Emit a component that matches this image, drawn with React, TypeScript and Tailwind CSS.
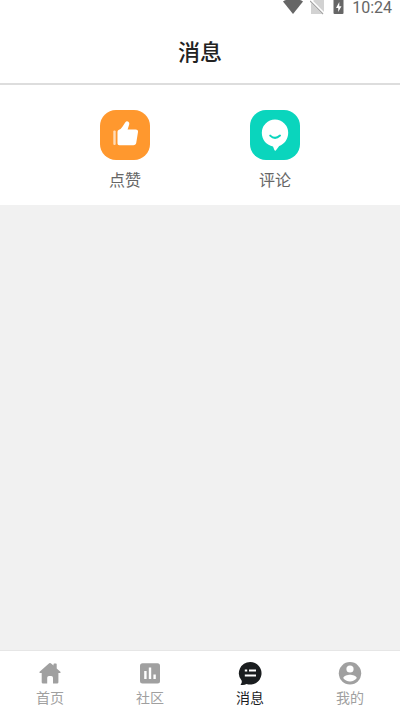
import type { ReactNode } from 'react';

function StatusBar() {
  return (
    <div className="flex h-4 items-start justify-end pr-2 text-[#666666]">
      <svg className="mr-[7px] h-4 w-5" viewBox="0 0 20 16" fill="currentColor" aria-hidden="true">
        <path d="M0 1.5Q1.5 0 3 0H17Q18.5 0 20 1.5L10 14Z" />
      </svg>
      <svg className="mr-[7px] h-4 w-4" viewBox="0 0 16 16" aria-hidden="true">
        <path d="M4 0H14V14H1V3Z" fill="#d2d2d2" />
        <path d="M0 0L14 14" stroke="#ffffff" strokeWidth="3" />
        <path d="M0 1L13 14" stroke="#a5a5a5" strokeWidth="1.2" />
      </svg>
      <svg className="mr-[7px] h-4 w-3" viewBox="0 0 12 16" aria-hidden="true">
        <path d="M0.5 0H10.5V13Q10.5 14 9.5 14H1.5Q0.5 14 0.5 13Z" fill="currentColor" />
        <path d="M6.3 2L3 8H5.2V12L8.5 6.2H6.3Z" fill="#ffffff" />
      </svg>
      <span className="font-['Roboto',sans-serif] text-base leading-4">10:24</span>
    </div>
  );
}

function ThumbIcon() {
  return (
    <svg className="h-[50px] w-[50px]" viewBox="0 0 50 50" aria-hidden="true">
      <rect width="50" height="50" rx="16" fill="#ff982e" />
      <rect x="13.3" y="20.5" width="2.4" height="14.5" rx="1" fill="#ffdcb8" />
      <path
        d="M17.5 21.8Q17.5 20.3 19 19.8Q21.2 19 22.6 16.6L25.2 12.6Q26.6 10.6 28.4 11.8Q29.8 12.8 29.2 14.6L27.6 19.4H35.6Q38.4 19.4 38 22.1L36.3 32.5Q35.9 35.2 33.3 35.2H19.3Q17.5 35.2 17.5 33.4Z"
        fill="#ffffff"
      />
    </svg>
  );
}

function SmileIcon() {
  return (
    <svg className="h-[50px] w-[50px]" viewBox="0 0 50 50" aria-hidden="true">
      <rect width="50" height="50" rx="16" fill="#0ad5bd" />
      <path
        d="M25 9.6A13.2 13.2 0 0 1 38.2 22.8C38.2 29.3 34.2 34.3 29.2 36L26 40.2Q25 41.4 24.4 40L23 36.4C16.8 35.6 11.8 29.8 11.8 22.8A13.2 13.2 0 0 1 25 9.6Z"
        fill="#ffffff"
      />
      <path d="M20.2 25.6Q25 30.2 30 25.6" fill="none" stroke="#0ad5bd" strokeWidth="2" strokeLinecap="round" />
    </svg>
  );
}

function Shortcut({ label, icon }: { label: string; icon: ReactNode }) {
  return (
    <button type="button" className="flex flex-col items-center gap-[7px] text-base leading-6 text-[#666666]">
      {icon}
      {label}
    </button>
  );
}

function HomeIcon() {
  return (
    <svg className="h-6 w-6" viewBox="0 0 24 24" fill="currentColor" aria-hidden="true">
      <path d="M11.2 2.3Q12 1.6 12.8 2.3L15.5 4.6V3.2Q15.5 2.5 16.2 2.5H18Q18.7 2.5 18.7 3.2V7.4L22.4 10.7Q23.2 12 21.8 12.1H20.4V21.3Q20.4 22.6 19.1 22.6H15V16.8Q15 15 13.2 15H11Q9.2 15 9.2 16.8V22.6H5Q3.7 22.6 3.7 21.3V12.1H2.2Q0.8 12 1.6 10.7Z" />
    </svg>
  );
}

function ChartIcon() {
  return (
    <svg className="h-6 w-6" viewBox="0 0 24 24" aria-hidden="true">
      <rect x="2" y="2.3" width="20" height="20.3" rx="2.5" fill="currentColor" />
      <path d="M6.2 10H8.6V18H6.2ZM10.8 6.6H13.2V18H10.8ZM15.4 13.4H17.8V18H15.4Z" fill="#ffffff" />
    </svg>
  );
}

function MessageIcon() {
  return (
    <svg className="h-6 w-6" viewBox="0 0 24 24" aria-hidden="true">
      <path
        d="M12.2 1A11.3 11.3 0 1 1 8.6 23Q6 24.2 3 24Q2.4 23.8 3 23Q4.2 21.6 3.6 19.6A11.3 11.3 0 0 1 12.2 1Z"
        fill="currentColor"
      />
      <path d="M6.8 9.4H9.2M11 9.4H18M6.8 14.6H18" stroke="#ffffff" strokeWidth="2" />
    </svg>
  );
}

function ProfileIcon() {
  return (
    <svg className="h-6 w-6" viewBox="0 0 24 24" aria-hidden="true">
      <circle cx="12" cy="12.3" r="11.2" fill="currentColor" />
      <circle cx="12" cy="8" r="3.6" fill="#ffffff" />
      <path d="M5.2 17C5.8 14.6 9.6 13.8 12 13.8S18.2 14.6 18.8 17C17.2 19.2 14.8 20.4 12 20.4S6.8 19.2 5.2 17Z" fill="#ffffff" />
    </svg>
  );
}

const tabs = [
  { label: '首页', icon: <HomeIcon />, active: false },
  { label: '社区', icon: <ChartIcon />, active: false },
  { label: '消息', icon: <MessageIcon />, active: true },
  { label: '我的', icon: <ProfileIcon />, active: false },
];

export default function App() {
  return (
    <div className="flex min-h-screen flex-col bg-[#f1f1f1] font-['Noto_Sans_CJK_SC',sans-serif]">
      <header className="border-b-2 border-[#dddddd] bg-white">
        <StatusBar />
        <h1 className="pt-[18px] pb-[17px] text-center text-[22px] leading-8 font-medium text-[#222222]">消息</h1>
      </header>
      <main className="flex-1">
        <div className="grid grid-cols-2 justify-items-center bg-white px-[12.5%] pt-[25px] pb-3.5">
          <Shortcut label="点赞" icon={<ThumbIcon />} />
          <Shortcut label="评论" icon={<SmileIcon />} />
        </div>
      </main>
      <nav className="grid grid-cols-4 border-t border-[#e6e6e6] bg-white pt-2.5 pb-px">
        {tabs.map((tab) => (
          <button
            key={tab.label}
            type="button"
            aria-current={tab.active ? 'page' : undefined}
            className={
              tab.active
                ? 'flex flex-col items-center text-sm leading-6 text-[#1a1d1f]'
                : 'flex flex-col items-center text-sm leading-6 text-[#a0a0a0]'
            }
          >
            {tab.icon}
            {tab.label}
          </button>
        ))}
      </nav>
    </div>
  );
}
